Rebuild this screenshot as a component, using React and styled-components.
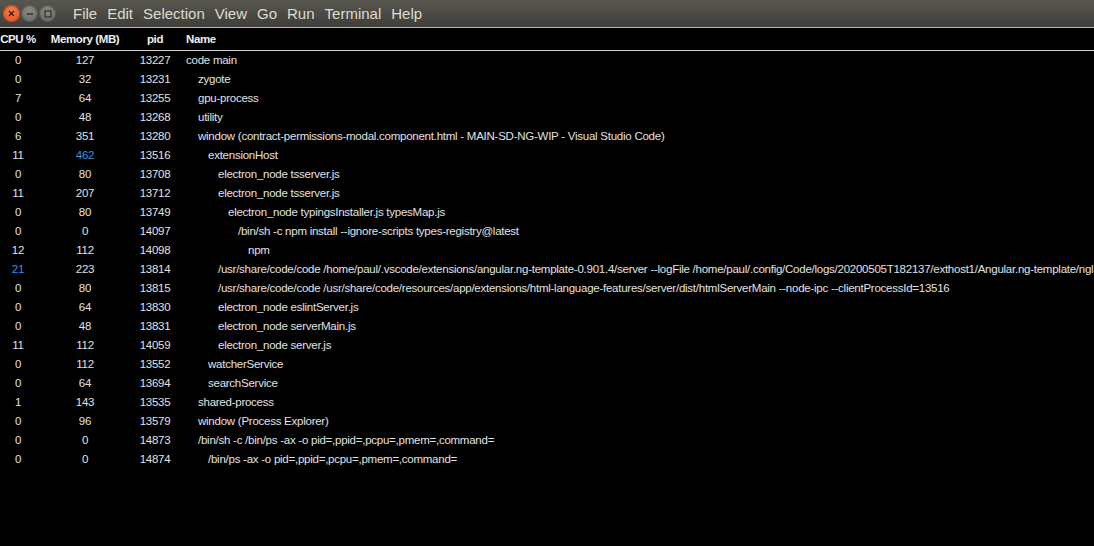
import styled, { createGlobalStyle } from 'styled-components'

const GlobalStyle = createGlobalStyle`
html, body {
  margin: 0;
  padding: 0;
  background: #000;
}
body {
  font-family: "Liberation Sans", Arial, sans-serif;
}
`

const processes = [
    { cpu: 0, mem: 127, pid: 13227, level: 0, name: 'code main' },
    { cpu: 0, mem: 32, pid: 13231, level: 1, name: 'zygote' },
    { cpu: 7, mem: 64, pid: 13255, level: 1, name: 'gpu-process' },
    { cpu: 0, mem: 48, pid: 13268, level: 1, name: 'utility' },
    { cpu: 6, mem: 351, pid: 13280, level: 1, name: 'window (contract-permissions-modal.component.html - MAIN-SD-NG-WIP - Visual Studio Code)' },
    { cpu: 11, mem: 462, pid: 13516, level: 2, name: 'extensionHost', memHot: true },
    { cpu: 0, mem: 80, pid: 13708, level: 3, name: 'electron_node tsserver.js' },
    { cpu: 11, mem: 207, pid: 13712, level: 3, name: 'electron_node tsserver.js' },
    { cpu: 0, mem: 80, pid: 13749, level: 4, name: 'electron_node typingsInstaller.js typesMap.js' },
    { cpu: 0, mem: 0, pid: 14097, level: 5, name: '/bin/sh -c npm install --ignore-scripts types-registry@latest' },
    { cpu: 12, mem: 112, pid: 14098, level: 6, name: 'npm' },
    { cpu: 21, mem: 223, pid: 13814, level: 3, cpuHot: true, name: '/usr/share/code/code /home/paul/.vscode/extensions/angular.ng-template-0.901.4/server --logFile /home/paul/.config/Code/logs/20200505T182137/exthost1/Angular.ng-template/nglangsvc.log' },
    { cpu: 0, mem: 80, pid: 13815, level: 3, name: '/usr/share/code/code /usr/share/code/resources/app/extensions/html-language-features/server/dist/htmlServerMain --node-ipc --clientProcessId=13516' },
    { cpu: 0, mem: 64, pid: 13830, level: 3, name: 'electron_node eslintServer.js' },
    { cpu: 0, mem: 48, pid: 13831, level: 3, name: 'electron_node serverMain.js' },
    { cpu: 11, mem: 112, pid: 14059, level: 3, name: 'electron_node server.js' },
    { cpu: 0, mem: 112, pid: 13552, level: 2, name: 'watcherService' },
    { cpu: 0, mem: 64, pid: 13694, level: 2, name: 'searchService' },
    { cpu: 1, mem: 143, pid: 13535, level: 1, name: 'shared-process' },
    { cpu: 0, mem: 96, pid: 13579, level: 1, name: 'window (Process Explorer)' },
    { cpu: 0, mem: 0, pid: 14873, level: 1, name: '/bin/sh -c /bin/ps -ax -o pid=,ppid=,pcpu=,pmem=,command=' },
    { cpu: 0, mem: 0, pid: 14874, level: 2, name: '/bin/ps -ax -o pid=,ppid=,pcpu=,pmem=,command=' },
]

const menus = ['File', 'Edit', 'Selection', 'View', 'Go', 'Run', 'Terminal', 'Help']

const App = () => {
    return <Window>
        <GlobalStyle />
        <TitleBar>
            <Controls>
                <WinButton $close>
                    <svg width="7" height="7" viewBox="0 0 7 7">
                        <path d="M1 1L6 6M6 1L1 6" stroke="#3a1a10" strokeWidth="1.3" />
                    </svg>
                </WinButton>
                <WinButton>
                    <svg width="8" height="8" viewBox="0 0 8 8">
                        <path d="M1 4H7" stroke="#2e2d2a" strokeWidth="1.4" />
                    </svg>
                </WinButton>
                <WinButton>
                    <svg width="8" height="8" viewBox="0 0 8 8">
                        <rect x="1" y="1" width="6" height="6" fill="none" stroke="#2e2d2a" strokeWidth="1.2" />
                    </svg>
                </WinButton>
            </Controls>
            <Menu>
                {menus.map(m => <MenuItem key={m}>{m}</MenuItem>)}
            </Menu>
        </TitleBar>
        <Table>
            <HeaderRow>
                <HeadCell>CPU %</HeadCell>
                <HeadCell>Memory (MB)</HeadCell>
                <HeadCell>pid</HeadCell>
                <HeadCell $left>Name</HeadCell>
            </HeaderRow>
            {processes.map(p => (
                <Row key={p.pid}>
                    <Cell $hot={p.cpuHot}>{p.cpu}</Cell>
                    <Cell $hot={p.memHot}>{p.mem}</Cell>
                    <Cell>{p.pid}</Cell>
                    <NameCell $level={p.level}>{p.name}</NameCell>
                </Row>
            ))}
        </Table>
    </Window>
}

const Window = styled.div`
width: 1094px;
height: 546px;
background: #000;
overflow: hidden;
display: flex;
flex-direction: column;
`

const TitleBar = styled.div`
height: 27px;
flex-shrink: 0;
display: flex;
align-items: center;
background: linear-gradient(#58574f, #3e3d38);
border-bottom: 1px solid #b9b9b6;
`

const Controls = styled.div`
display: flex;
gap: 1px;
padding-left: 3px;
`

const WinButton = styled.div`
width: 17px;
height: 17px;
border-radius: 50%;
display: flex;
align-items: center;
justify-content: center;
background: ${p => p.$close
    ? 'radial-gradient(circle at 50% 35%, #f47a4f, #e2501f)'
    : 'radial-gradient(circle at 50% 35%, #8a8984, #65645f)'};
box-shadow: inset 0 0 0 1px ${p => p.$close ? '#c2461c' : '#55544f'};
`

const Menu = styled.div`
display: flex;
gap: 10px;
margin-left: 17px;
`

const MenuItem = styled.div`
color: #dfdbd2;
font-size: 15px;
line-height: 27px;
`

const Table = styled.div`
display: flex;
flex-direction: column;
color: #e2e2e2;
font-size: 11.5px;
letter-spacing: -0.25px;
`

const HeaderRow = styled.div`
display: grid;
grid-template-columns: 36px 98px 42px 1fr;
height: 22px;
align-items: center;
border-bottom: 1px solid #d0d0d0;
`

const HeadCell = styled.div`
font-weight: bold;
text-align: ${p => p.$left ? 'left' : 'center'};
padding-left: ${p => p.$left ? '10px' : '0'};
white-space: nowrap;
color: #f0f0f0;
letter-spacing: -0.4px;
`

const Row = styled.div`
display: grid;
grid-template-columns: 36px 98px 42px 1fr;
height: 19px;
align-items: start;
line-height: 18px;
`

const Cell = styled.div`
text-align: center;
color: ${p => p.$hot ? '#3794e0' : 'inherit'};
`

const NameCell = styled.div`
padding-left: ${p => p.$level ? 12 + p.$level * 10 : 10}px;
white-space: nowrap;
overflow: hidden;
`

export default App
